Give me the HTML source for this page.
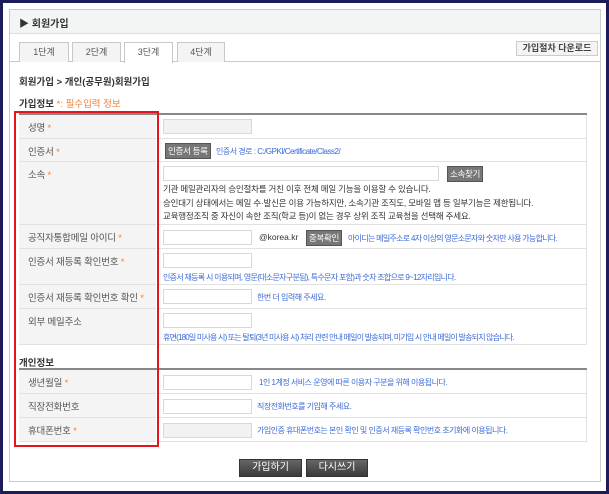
<!DOCTYPE html>
<html><head><meta charset="utf-8"><style>
*{margin:0;padding:0;box-sizing:border-box}
body{width:609px;height:494px;background:#1c1c5a;position:relative;overflow:hidden;font-family:"Liberation Sans","Noto Sans CJK KR","NanumGothic",sans-serif;font-size:10px;color:#444}
.a{position:absolute}
#bg{left:3px;top:3px;width:603px;height:488px;background:#fff}
#panel{left:9px;top:9px;width:592px;height:473px;border:1px solid #ccc;background:#fff}
#hdr{left:10px;top:10px;width:590px;height:24px;background:#f3f4f4;border-bottom:1px solid #dde}
.tab{top:42px;height:20px;border:1px solid #c8c8c8;border-bottom:none;background:#f4f4f4;text-align:center;line-height:19px;font-size:9px;color:#555}
.lbl{background:#f4f4f4;left:19px;width:137px;border-bottom:1px solid #e2e2e2;padding:5px 0 0 9px;color:#555;font-size:9.5px;letter-spacing:-0.2px;white-space:nowrap}
.val{left:157px;width:430px;border-bottom:1px solid #e2e2e2;border-right:1px solid #e2e2e2}
.st{color:#f08030}
.in{height:15px;border:1px solid #d8d8d8;background:#fff}
.bl{color:#3a6ad8;font-size:8px;letter-spacing:-0.5px;white-space:nowrap}
.gb{background:#777;color:#fff;font-size:8.5px;padding:1px 2px;border:1px solid #555;letter-spacing:-0.3px}
.btn{top:459px;height:18px;background:linear-gradient(#666,#3a3a3a);border:1px solid #333;color:#fff;text-align:center;line-height:16px;font-size:10px}
</style></head><body>
<div class="a" id="bg"></div>
<div class="a" id="panel"></div>
<div class="a" id="hdr"></div>
<div class="a" style="left:19px;top:15px;font-weight:bold;font-size:10px;color:#333">▶ 회원가입</div>
<div class="a" style="left:10px;top:61px;width:590px;border-top:1px solid #c8c8c8"></div>
<div class="a tab" style="left:19px;width:50px">1단계</div>
<div class="a tab" style="left:72px;width:49px">2단계</div>
<div class="a tab" style="left:124px;width:49px;background:#fff;height:21px">3단계</div>
<div class="a tab" style="left:177px;width:48px">4단계</div>
<div class="a" style="left:516px;top:41px;width:82px;height:15px;border:1px solid #ccc;background:#f4f4f4;font-weight:bold;font-size:9px;text-align:center;line-height:13px;color:#444">가입절차 다운로드</div>
<div class="a" style="left:19px;top:74px;font-weight:bold;font-size:9.5px;color:#333">회원가입 &gt; 개인(공무원)회원가입</div>
<div class="a" style="left:19px;top:96px;font-weight:bold;font-size:9.5px;color:#333">가입정보 <span style="color:#f08030;font-weight:normal">*: 필수입력 정보</span></div>
<div class="a" style="left:19px;top:113px;width:568px;border-top:2px solid #888"></div>

<div class="a lbl" style="top:115px;height:24px">성명 <span class="st">*</span></div>
<div class="a val" style="top:115px;height:24px"><div class="a in" style="left:6px;top:4px;width:89px;background:#f2f2f2"></div></div>
<div class="a lbl" style="top:139px;height:23px">인증서 <span class="st">*</span></div>
<div class="a val" style="top:139px;height:23px"><span class="a gb" style="left:8px;top:4px">인증서 등록</span><span class="a bl" style="left:59px;top:7px">인증서 경로 : C:/GPKI/Certificate/Class2/</span></div>
<div class="a lbl" style="top:162px;height:63px">소속 <span class="st">*</span></div>
<div class="a val" style="top:162px;height:63px"><div class="a in" style="left:6px;top:4px;width:276px"></div><span class="a gb" style="left:290px;top:4px">소속찾기</span>
<div class="a" style="left:6px;top:21px;font-size:8.5px;letter-spacing:-0.2px;line-height:13.5px;color:#333;white-space:nowrap">기관 메일관리자의 승인절차를 거친 이후 전체 메일 기능을 이용할 수 있습니다.<br>승인대기 상태에서는 메일 수·발신은 이용 가능하지만, 소속기관 조직도, 모바일 앱 등 일부기능은 제한됩니다.<br>교육행정조직 중 자신이 속한 조직(학교 등)이 없는 경우 상위 조직 교육청을 선택해 주세요.</div></div>
<div class="a lbl" style="top:225px;height:24px">공직자통합메일 아이디 <span class="st">*</span></div>
<div class="a val" style="top:225px;height:24px"><div class="a in" style="left:6px;top:5px;width:89px"></div><span class="a" style="left:102px;top:7px;font-size:8.5px;color:#333">@korea.kr</span><span class="a gb" style="left:149px;top:5px">중복확인</span><span class="a bl" style="left:191px;top:8px;letter-spacing:-0.7px">아이디는 메일주소로 4자 이상의 영문소문자와 숫자만 사용 가능합니다.</span></div>
<div class="a lbl" style="top:249px;height:36px">인증서 재등록 확인번호 <span class="st">*</span></div>
<div class="a val" style="top:249px;height:36px"><div class="a in" style="left:6px;top:4px;width:89px"></div><span class="a bl" style="left:6px;top:23px;letter-spacing:-0.7px">인증서 재등록 시 이용되며, 영문(대소문자구분됨), 특수문자 포함)과 숫자 조합으로 9~12자리입니다.</span></div>
<div class="a lbl" style="top:285px;height:24px">인증서 재등록 확인번호 확인 <span class="st">*</span></div>
<div class="a val" style="top:285px;height:24px"><div class="a in" style="left:6px;top:4px;width:89px"></div><span class="a bl" style="left:100px;top:7px">한번 더 입력해 주세요.</span></div>
<div class="a lbl" style="top:309px;height:36px">외부 메일주소</div>
<div class="a val" style="top:309px;height:36px"><div class="a in" style="left:6px;top:4px;width:89px"></div><span class="a bl" style="left:6px;top:23px;letter-spacing:-0.8px">휴면(180일 미사용 시) 또는 탈퇴(3년 미사용 시) 처리 관련 안내 메일이 발송되며, 미기입 시 안내 메일이 발송되지 않습니다.</span></div>

<div class="a" style="left:19px;top:355px;font-weight:bold;font-size:9.5px;color:#333">개인정보</div>
<div class="a" style="left:19px;top:368px;width:568px;border-top:2px solid #888"></div>
<div class="a lbl" style="top:370px;height:24px">생년월일 <span class="st">*</span></div>
<div class="a val" style="top:370px;height:24px"><div class="a in" style="left:6px;top:5px;width:89px"></div><span class="a bl" style="left:102px;top:7px">1인 1계정 서비스 운영에 따른 이용자 구분을 위해 이용됩니다.</span></div>
<div class="a lbl" style="top:394px;height:24px">직장전화번호</div>
<div class="a val" style="top:394px;height:24px"><div class="a in" style="left:6px;top:5px;width:89px"></div><span class="a bl" style="left:100px;top:7px">직장전화번호를 기입해 주세요.</span></div>
<div class="a lbl" style="top:418px;height:24px">휴대폰번호 <span class="st">*</span></div>
<div class="a val" style="top:418px;height:24px"><div class="a in" style="left:6px;top:5px;width:89px;background:#f2f2f2"></div><span class="a bl" style="left:100px;top:7px">가입인증 휴대폰번호는 본인 확인 및 인증서 재등록 확인번호 초기화에 이용됩니다.</span></div>

<div class="a" style="left:14px;top:111px;width:145px;height:336px;border:2px solid #e8141c"></div>
<div class="a btn" style="left:239px;width:63px">가입하기</div>
<div class="a btn" style="left:306px;width:62px">다시쓰기</div>
</body></html>
